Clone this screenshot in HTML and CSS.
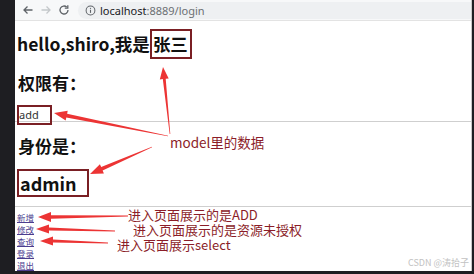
FILE: index.html
```html
<!DOCTYPE html>
<html lang="zh">
<head>
    <meta charset="UTF-8">
    <title>login</title>
    <link rel="stylesheet" href="styles.css">
</head>
<body>
    <div class="screen">
        <div class="toolbar">
            <svg class="nav-icon" viewBox="0 0 12 12" width="12" height="12">
                <path d="M10.5 6H2M5.5 2.5L2 6l3.5 3.5" fill="none" stroke="#5f6368" stroke-width="1.3"/>
            </svg>
            <svg class="nav-icon" viewBox="0 0 12 12" width="12" height="12">
                <path d="M1.5 6H10M6.5 2.5L10 6 6.5 9.5" fill="none" stroke="#c4c7ca" stroke-width="1.3"/>
            </svg>
            <svg class="nav-icon" viewBox="0 0 12 12" width="12" height="12">
                <path d="M10 6a4 4 0 1 1-1.2-2.85" fill="none" stroke="#5f6368" stroke-width="1.3"/>
                <path d="M9.8 1.2v3H6.8" fill="none" stroke="#5f6368" stroke-width="1.3"/>
            </svg>
            <div class="address">
                <svg viewBox="0 0 12 12" width="11" height="11">
                    <circle cx="6" cy="6" r="4.8" fill="none" stroke="#5f6368" stroke-width="1.1"/>
                    <path d="M6 5.2v3.4" stroke="#5f6368" stroke-width="1.2"/>
                    <circle cx="6" cy="3.6" r="0.7" fill="#5f6368"/>
                </svg>
                <span class="url">localhost<span class="url-rest">:8889/login</span></span>
            </div>
        </div>

        <div class="page">
            <h1 class="title">hello,shiro,我是<span class="mark">张三</span></h1>
            <h2 class="label">权限有：</h2>
            <div class="perm"><span class="mark mark-small">add</span></div>
            <hr>
            <h2 class="label">身份是：</h2>
            <h1 class="role"><span class="mark">admin</span></h1>
            <hr>
            <div class="links">
                <a href="#">新增</a>
                <a href="#">修改</a>
                <a href="#">查询</a>
                <a href="#">登录</a>
                <a href="#">退出</a>
            </div>
        </div>

        <svg class="arrows" viewBox="0 0 474 274" width="474" height="274">
            <g fill="#ec3434">
                <polygon points="170.3,134 165.7,78.7 168.7,78.5 163,67 159.8,79.4 162.8,79.1 169.7,134"/>
                <polygon points="168.1,135.7 67.1,113.8 67.7,110.7 54,113 65.7,120.5 66.3,117.4 167.9,136.3"/>
                <polygon points="151.9,146.7 101.2,167.1 99.9,164.2 90,174 103.9,173.4 102.6,170.5 152.1,147.3"/>
                <polygon points="128,215.6 51,215.2 51,212 38,217 51,222 51,218.8 128,216.4"/>
                <polygon points="115,230.6 49,227.6 49,224.5 36,229 49,233.5 49,230.6 115,231.4"/>
                <polygon points="108,242.6 53,239.6 53,236.5 40,241 53,245.5 53,242.6 108,243.4"/>
            </g>
        </svg>

        <div class="note note-model">model里的数据</div>
        <div class="note note-add">进入页面展示的是ADD</div>
        <div class="note note-edit">进入页面展示的是资源未授权</div>
        <div class="note note-query">进入页面展示select</div>
        <div class="watermark">CSDN @涛拾子</div>
    </div>
</body>
</html>
```

FILE: styles.css
```css
body {
    margin: 0;
    background: #1e1e22;
    font-family: "Noto Sans CJK SC", "Noto Sans", sans-serif;
    width: 474px;
    height: 274px;
    overflow: hidden;
}

.screen {
    position: relative;
    margin-left: 15px;
    width: 456px;
    height: 271px;
    background: white;
    border-right: 1px solid #c9c9c9;
}

.toolbar {
    display: flex;
    align-items: center;
    height: 21px;
    background: #f7f8f9;
    border-bottom: 1px solid #e3e3e3;
    box-sizing: border-box;
    padding-left: 4px;
}

.nav-icon {
    margin: 0 3px 0 3px;
}

.address {
    display: flex;
    align-items: center;
    flex: 1;
    height: 17px;
    margin-left: 5px;
    padding-left: 7px;
    background: #eef0f2;
    border-radius: 9px 0 0 9px;
}

.url {
    margin-left: 4px;
    font-size: 11px;
    color: #202124;
    font-family: "Noto Sans", sans-serif;
}

.url-rest {
    color: #6b6f73;
}

.page {
    padding-left: 2px;
    color: #111;
}

.title, .role {
    margin: 8px 0 0 0;
    font-size: 17.5px;
    line-height: 30px;
    font-weight: bold;
}

.role {
    margin-top: 10px;
    font-size: 18px;
    line-height: 28px;
}

.mark {
    display: inline-block;
    border: 2px solid #7a1f24;
    padding: 0 2px 0 1px;
    line-height: 26px;
}

.role .mark {
    line-height: 24px;
    padding-right: 10px;
}

.label {
    margin: 12px 0 0 1px;
    font-size: 17px;
    line-height: 24px;
    font-weight: bold;
}

.perm {
    margin-top: 5px;
    height: 20px;
}

.mark-small {
    font-size: 11px;
    font-weight: normal;
    line-height: 16px;
    padding: 0 11px 0 0;
    color: #333;
    font-family: "Noto Sans", sans-serif;
}

hr {
    margin: 1px 0 0 -2px;
    border: 0;
    border-top: 1px solid #cfcfcf;
}

.label + .role {
    margin-top: 11px;
}

.role + hr {
    margin-top: 9px;
}

.links {
    display: flex;
    flex-direction: column;
    align-items: flex-start;
    margin-top: 4px;
}

.links a {
    display: block;
    height: 12px;
    font-size: 8.5px;
    line-height: 12px;
    color: #4b3d8f;
}

.arrows {
    position: absolute;
    left: -15px;
    top: 0;
}

.note {
    position: absolute;
    color: #8b1d28;
    font-size: 13px;
    line-height: 16px;
    white-space: nowrap;
}

.note-model {
    left: 155px;
    top: 134px;
    font-size: 13.5px;
}

.note-add {
    left: 113px;
    top: 207px;
}

.note-edit {
    left: 118px;
    top: 222px;
}

.note-query {
    left: 102px;
    top: 237px;
}

.watermark {
    position: absolute;
    right: 2px;
    bottom: 2px;
    font-size: 9px;
    color: #c2c2c2;
}
```
